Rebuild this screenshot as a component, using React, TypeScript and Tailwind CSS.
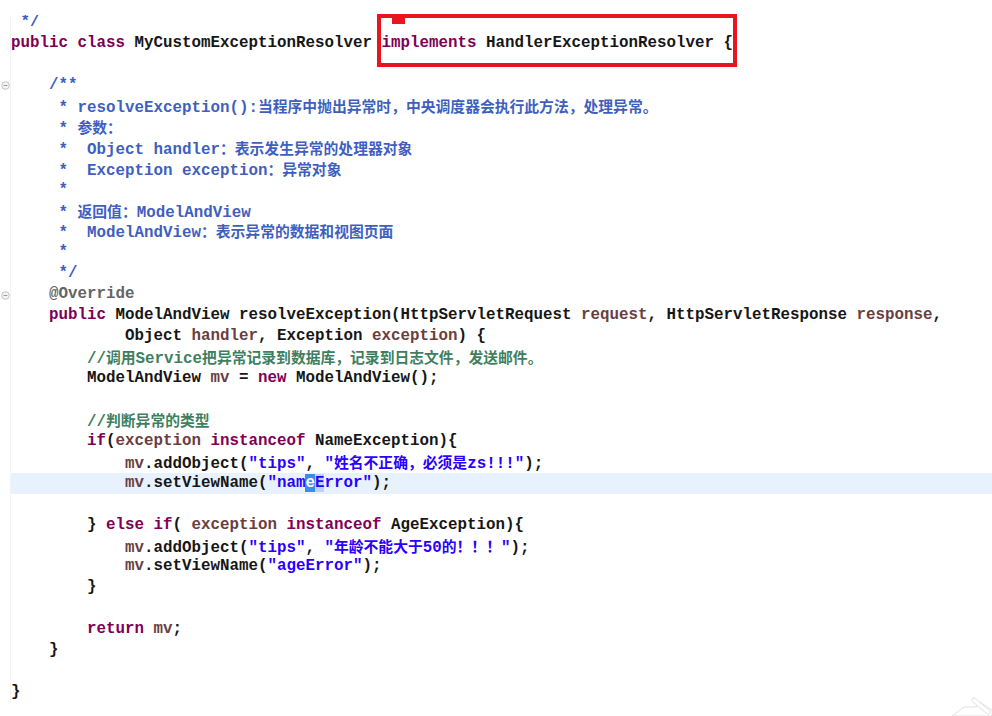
import React from 'react'

type Tok = [string, string]
type Line = { toks: Tok[]; fold?: boolean; hl?: boolean }

const CJK = /([\u3000-\u303f\u4e00-\u9fff\uff00-\uffef]+)/

const tone: Record<string, string> = {
  k: 'text-[#7f0055]',
  t: 'text-[#161616]',
  c: 'text-[#3f5fbf]',
  g: 'text-[#3f7f5f]',
  s: 'text-[#2a00ff]',
  a: 'text-[#646464]',
  v: 'text-[#6a3e3e]',
  sel: 'bg-[#3b8ee6] text-white',
  sel2: 'bg-[#b9d6f6] text-[#2a00ff]',
}

const lines: Line[] = [
  {
    toks: [
      ['k', 'public'], ['t', ' '], ['k', 'class'],
      ['t', ' MyCustomExceptionResolver '], ['k', 'implements'],
      ['t', ' HandlerExceptionResolver {'],
    ],
  },
  { toks: [] },
  { toks: [['c', '    /**']], fold: true },
  { toks: [['c', '     * resolveException():当程序中抛出异常时，中央调度器会执行此方法，处理异常。']] },
  { toks: [['c', '     * 参数：']] },
  { toks: [['c', '     *  Object handler：表示发生异常的处理器对象']] },
  { toks: [['c', '     *  Exception exception：异常对象']] },
  { toks: [['c', '     *']] },
  { toks: [['c', '     * 返回值：ModelAndView']] },
  { toks: [['c', '     *  ModelAndView：表示异常的数据和视图页面']] },
  { toks: [['c', '     *']] },
  { toks: [['c', '     */']] },
  { toks: [['a', '    @Override']], fold: true },
  {
    toks: [
      ['t', '    '], ['k', 'public'],
      ['t', ' ModelAndView resolveException(HttpServletRequest '], ['v', 'request'],
      ['t', ', HttpServletResponse '], ['v', 'response'], ['t', ','],
    ],
  },
  {
    toks: [
      ['t', '            Object '], ['v', 'handler'], ['t', ', Exception '],
      ['v', 'exception'], ['t', ') {'],
    ],
  },
  { toks: [['g', '        //调用Service把异常记录到数据库，记录到日志文件，发送邮件。']] },
  {
    toks: [
      ['t', '        ModelAndView '], ['v', 'mv'], ['t', ' = '], ['k', 'new'],
      ['t', ' ModelAndView();'],
    ],
  },
  { toks: [] },
  { toks: [['g', '        //判断异常的类型']] },
  {
    toks: [
      ['t', '        '], ['k', 'if'], ['t', '('], ['v', 'exception'], ['t', ' '],
      ['k', 'instanceof'], ['t', ' NameException){'],
    ],
  },
  {
    toks: [
      ['t', '            '], ['v', 'mv'], ['t', '.addObject('], ['s', '"tips"'],
      ['t', ', '], ['s', '"姓名不正确，必须是zs!!!"'], ['t', ');'],
    ],
  },
  {
    toks: [
      ['t', '            '], ['v', 'mv'], ['t', '.setViewName('], ['s', '"nam'],
      ['sel', 'e'], ['sel2', 'E'], ['s', 'rror"'], ['t', ');'],
    ],
    hl: true,
  },
  { toks: [] },
  {
    toks: [
      ['t', '        } '], ['k', 'else'], ['t', ' '], ['k', 'if'], ['t', '( '],
      ['v', 'exception'], ['t', ' '], ['k', 'instanceof'], ['t', ' AgeException){'],
    ],
  },
  {
    toks: [
      ['t', '            '], ['v', 'mv'], ['t', '.addObject('], ['s', '"tips"'],
      ['t', ', '], ['s', '"年龄不能大于50的！！！"'], ['t', ');'],
    ],
  },
  {
    toks: [
      ['t', '            '], ['v', 'mv'], ['t', '.setViewName('], ['s', '"ageError"'],
      ['t', ');'],
    ],
  },
  { toks: [['t', '        }']] },
  { toks: [] },
  { toks: [['t', '        '], ['k', 'return'], ['t', ' '], ['v', 'mv'], ['t', ';']] },
  { toks: [['t', '    }']] },
  { toks: [] },
  { toks: [['t', '}']] },
]

// end of the previous javadoc, cut off by the top of the frame
const topLine: Line = { toks: [['c', ' */']] }

const Segment: React.FC<{ tok: Tok }> = ({ tok }) => {
  const [kind, text] = tok
  const parts = text.split(CJK)
  return (
    <span className={tone[kind]}>
      {parts.map((p, i) =>
        i % 2 === 1 ? (
          <span key={i} className="font-['Noto_Sans_CJK_SC',sans-serif] text-[14.8px] font-bold">
            {p}
          </span>
        ) : (
          <React.Fragment key={i}>{p}</React.Fragment>
        ),
      )}
    </span>
  )
}

const FoldIcon = () => (
  <svg width="9" height="9" viewBox="0 0 9 9" className="mt-[1px]">
    <circle cx="4.5" cy="4.5" r="3.8" fill="#f4f4f4" stroke="#b9bcc2" strokeWidth="0.9" />
    <line x1="2.6" y1="4.5" x2="6.4" y2="4.5" stroke="#8d9097" strokeWidth="0.9" />
  </svg>
)

const CodeLine: React.FC<{ line: Line }> = ({ line }) => (
  <div className="flex h-[20.94px] leading-[20.94px]">
    <div className="w-[11px] shrink-0 flex items-center justify-center border-r border-[#f3f3f3]">
      {line.fold && <FoldIcon />}
    </div>
    <div className={`flex-1 whitespace-pre ${line.hl ? 'bg-[#e8f2fe]' : ''}`}>
      {line.toks.map((tok, i) => (
        <Segment key={i} tok={tok} />
      ))}
    </div>
  </div>
)

export default function App() {
  return (
    <div className="relative w-[992px] h-[716px] overflow-hidden bg-white font-['Liberation_Mono','Noto_Sans_CJK_SC',monospace] font-bold text-[15.83px]">
      <div className="pt-[15px]">
        <div className="h-[18px] overflow-hidden flex flex-col justify-end">
          <CodeLine line={topLine} />
        </div>
        {lines.map((line, i) => (
          <CodeLine key={i} line={line} />
        ))}
      </div>

      {/* red annotation box drawn over the code */}
      <div className="absolute left-[377px] top-[14px] w-[360px] h-[53px] border-[4px] border-[#e8151f]" />
      <div className="absolute left-[392px] top-[15px] w-[13px] h-[9px] bg-[#e8151f]" />

      {/* player corner widget */}
      <svg className="absolute right-0 bottom-0" width="48" height="22" viewBox="0 0 48 22">
        <path d="M8 22 L20 13 L32 13 L36 8 L48 16 L48 22 Z" fill="#ffffff" stroke="#e0e0e0" strokeWidth="1" />
        <path d="M30 6 L44 18" stroke="#e6e6e6" strokeWidth="5" strokeLinecap="round" />
        <path d="M30 6 L44 18" stroke="#ffffff" strokeWidth="3" strokeLinecap="round" />
      </svg>
    </div>
  )
}
